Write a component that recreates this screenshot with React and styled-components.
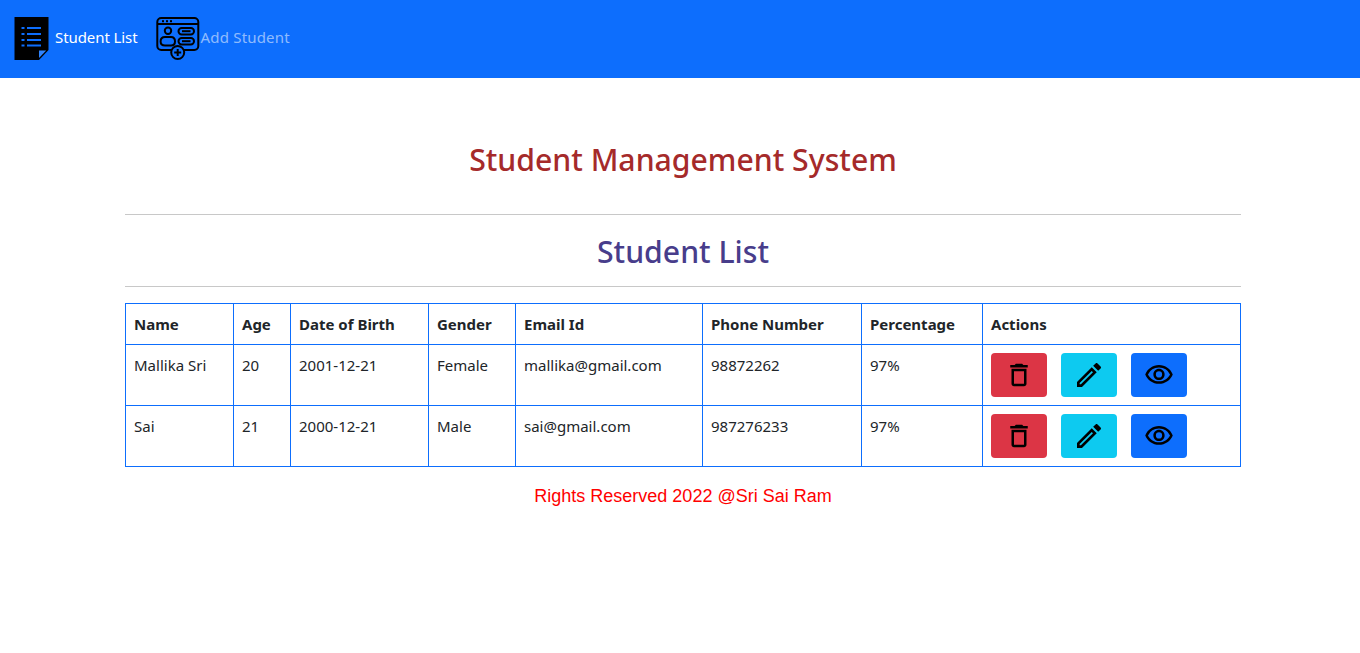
import React from 'react'
import styled, { createGlobalStyle } from 'styled-components'
import { MdDeleteOutline, MdOutlineEdit, MdOutlineVisibility } from 'react-icons/md'

const students = [
	{ id: 1, name: 'Mallika Sri', age: 20, dob: '2001-12-21', gender: 'Female', email: 'mallika@gmail.com', phone: '98872262', percentage: '97%' },
	{ id: 2, name: 'Sai', age: 21, dob: '2000-12-21', gender: 'Male', email: 'sai@gmail.com', phone: '987276233', percentage: '97%' },
]

const columns = [
	{ label: 'Name', width: 108 },
	{ label: 'Age', width: 57 },
	{ label: 'Date of Birth', width: 138 },
	{ label: 'Gender', width: 87 },
	{ label: 'Email Id', width: 187 },
	{ label: 'Phone Number', width: 159 },
	{ label: 'Percentage', width: 121 },
	{ label: 'Actions', width: 258 },
]

const ListIcon = () => (
	<svg width="36" height="43" viewBox="0 0 36 43">
		<path d="M0.5 0H34.5V33L25 43H0.5Z" fill="#000" />
		<path d="M25 33.5H32.2L25 41Z" fill="#2f83fd" />
		<g fill="#0d6efd">
			<rect x="7.5" y="10" width="3" height="2" />
			<rect x="13" y="10" width="14" height="2" />
			<rect x="7.5" y="16" width="3" height="2" />
			<rect x="13" y="16" width="14" height="2" />
			<rect x="7.5" y="22" width="3" height="2" />
			<rect x="13" y="22" width="14" height="2" />
			<rect x="7.5" y="27.5" width="3" height="2" />
			<rect x="13" y="27.5" width="14" height="2" />
		</g>
	</svg>
)

const AddStudentIcon = () => (
	<svg width="44" height="43" viewBox="0 0 44 43" fill="none" stroke="#000" strokeWidth="2">
		<rect x="1.3" y="1" width="41" height="32" rx="4" />
		<path d="M1.3 7H42.3" />
		<g fill="#000" stroke="none">
			<rect x="6" y="3.2" width="2" height="2" />
			<rect x="10" y="3.2" width="2" height="2" />
			<rect x="14" y="3.2" width="2" height="2" />
		</g>
		<circle cx="12" cy="13.7" r="3.2" />
		<path d="M9 20H15C17.5 20 19 22 19 24.5C19 27 17.5 28.5 15 28.5H9C6.2 28.5 4.6 27 4.6 24.5C4.6 22 6.2 20 9 20Z" />
		<rect x="22.5" y="11" width="15.5" height="6.4" rx="3.2" />
		<path d="M26 14.2H34.5" />
		<rect x="22.5" y="21" width="15.5" height="6.4" rx="3.2" />
		<path d="M26 24.2H34.5" />
		<circle cx="21.7" cy="35.5" r="6.5" fill="#0d6efd" />
		<path d="M21.7 32V39M18.2 35.5H25.2" />
	</svg>
)

const App = () => {
	return (
		<>
			<GlobalStyle />
			<Navbar>
				<NavItem>
					<ListIcon />
					<NavLink $active>Student List</NavLink>
				</NavItem>
				<NavItem>
					<AddStudentIcon />
					<NavLink>Add Student</NavLink>
				</NavItem>
			</Navbar>
			<Container>
				<Title $color="#a52a2a">Student Management System</Title>
				<Rule />
				<SubTitle $color="#483d8b">Student List</SubTitle>
				<Rule />
				<Table>
					<colgroup>
						{columns.map((col) => (
							<col key={col.label} style={{ width: col.width }} />
						))}
					</colgroup>
					<thead>
						<tr>
							{columns.map((col) => (
								<Th key={col.label}>{col.label}</Th>
							))}
						</tr>
					</thead>
					<tbody>
						{students.map((student) => (
							<tr key={student.id}>
								<Td>{student.name}</Td>
								<Td>{student.age}</Td>
								<Td>{student.dob}</Td>
								<Td>{student.gender}</Td>
								<Td>{student.email}</Td>
								<Td>{student.phone}</Td>
								<Td>{student.percentage}</Td>
								<Td>
									<Actions>
										<ActionButton $bg="#dc3545"><MdDeleteOutline size={30} /></ActionButton>
										<ActionButton $bg="#0dcaf0"><MdOutlineEdit size={32} /></ActionButton>
										<ActionButton $bg="#0d6efd"><MdOutlineVisibility size={30} /></ActionButton>
									</Actions>
								</Td>
							</tr>
						))}
					</tbody>
				</Table>
				<Footer>Rights Reserved 2022 @Sri Sai Ram</Footer>
			</Container>
		</>
	)
}

export default App

const GlobalStyle = createGlobalStyle`
	body {
		margin: 0;
		background: #fff;
		color: #212529;
		font-family: "Noto Sans", "Open Sans", sans-serif;
		font-size: 15px;
		line-height: 24px;
	}
`

const Navbar = styled.nav`
	height: 78px;
	padding: 0 14px 2px;
	box-sizing: border-box;
	background: #0d6efd;
	display: flex;
	align-items: center;
	gap: 18px;
`

const NavItem = styled.div`
	display: flex;
	align-items: center;
`

const NavLink = styled.a`
	margin-left: ${(p) => (p.$active ? '5px' : '1px')};
	padding-bottom: 2px;
	color: ${(p) => (p.$active ? '#fff' : 'rgba(255, 255, 255, 0.55)')};
	font-size: 15px;
	letter-spacing: ${(p) => (p.$active ? '-0.08px' : '0.18px')};
`

const Container = styled.main`
	width: 1116px;
	margin-left: 125px;
`

const Title = styled.h2`
	margin: 0;
	padding-top: 63px;
	height: 136px;
	box-sizing: border-box;
	color: ${(p) => p.$color};
	font-size: 30.2px;
	font-weight: 500;
	line-height: 38px;
	text-align: center;
`

const SubTitle = styled(Title)`
	padding-top: 18px;
	height: 71px;
`

const Rule = styled.hr`
	margin: 0;
	height: 1px;
	border: none;
	background: #c8c8c8;
`

const Table = styled.table`
	margin-top: 16px;
	width: 1115px;
	table-layout: fixed;
	border-collapse: collapse;
`

const Th = styled.th`
	padding: 8px;
	border: 1px solid #0d6efd;
	font-weight: 700;
	text-align: left;
`

const Td = styled.td`
	padding: 8px;
	border: 1px solid #0d6efd;
	vertical-align: top;
`

const Actions = styled.div`
	display: flex;
	gap: 14px;
`

const ActionButton = styled.button`
	width: 56px;
	height: 44px;
	padding: 0;
	border: none;
	border-radius: 4px;
	background: ${(p) => p.$bg};
	color: #000;
	display: flex;
	align-items: center;
	justify-content: center;
`

const Footer = styled.p`
	margin: 17px 0 0;
	color: #f00;
	font-family: "Liberation Sans", Arial, sans-serif;
	font-size: 18px;
	line-height: 24px;
	text-align: center;
`
